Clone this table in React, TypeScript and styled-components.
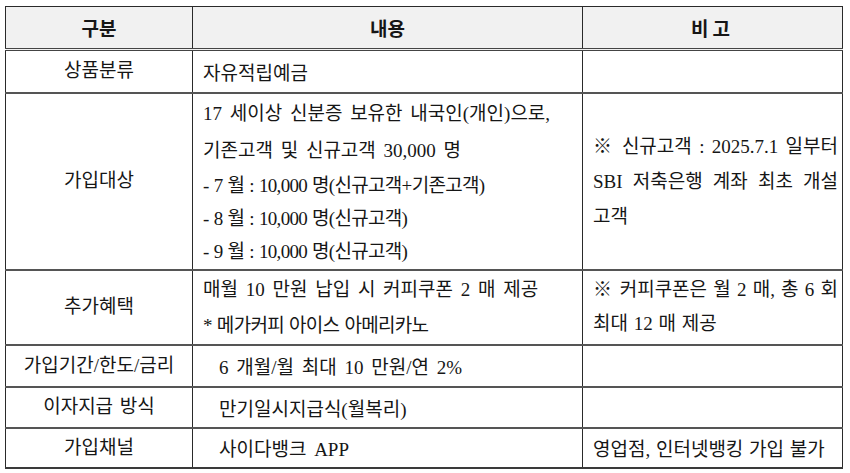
import React from "react";
import styled, { createGlobalStyle } from "styled-components";

const Global = createGlobalStyle`
  html, body { margin: 0; padding: 0; background: #ffffff; }
  body {
    font-family: "Liberation Serif", "Noto Sans CJK KR", serif;
    color: #161616;
  }
`;

const Page = styled.div`
  padding: 6px 0 0 5px;
`;

const Table = styled.table`
  width: 837px;
  border-collapse: collapse;
  table-layout: fixed;
  font-size: 19px;
  border-left: 1px solid #2a2a2a;
  border-right: 1px solid #2a2a2a;
  border-top: 1px solid #2a2a2a;
  border-bottom: 2px solid #3a3a3a;
`;

const HeadCell = styled.th<{ $ls?: number }>`
  height: 41px;
  padding: 0;
  background: #f1f1f1;
  font-weight: 700;
  text-align: center;
  vertical-align: middle;
  letter-spacing: ${(p) => p.$ls ?? 0}px;
  border-right: 1px solid #2a2a2a;
  border-bottom: 3px double #444;
  &:last-child { border-right: none; }
`;

const Row = styled.tr<{ $h: number }>`
  height: ${(p) => p.$h}px;
  & > td { border-bottom: 2px solid #555; }
  &:last-child > td { border-bottom: none; }
`;

const LabelCell = styled.td`
  padding: 0;
  text-align: center;
  vertical-align: middle;
  border-right: 1px solid #2a2a2a;
  line-height: 24px;
  white-space: nowrap;
  word-spacing: 2px;
`;

const ContentCell = styled.td<{ $indent?: boolean }>`
  padding: 0 4px 0 ${(p) => (p.$indent ? 26 : 10)}px;
  vertical-align: middle;
  border-right: 1px solid #2a2a2a;
  white-space: nowrap;
  word-spacing: 3px;
`;

const NoteCell = styled.td`
  padding: 0 4px 0 10px;
  vertical-align: middle;
  white-space: nowrap;
  word-spacing: 1px;
`;

const Line = styled.div<{ $lh: number; $justify?: boolean; $tight?: boolean }>`
  display: block;
  line-height: ${(p) => p.$lh}px;
  text-align: ${(p) => (p.$justify ? "justify" : "left")};
  text-align-last: ${(p) => (p.$justify ? "justify" : "auto")};
  white-space: ${(p) => (p.$justify ? "normal" : "nowrap")};
  word-break: keep-all;
  word-spacing: ${(p) => (p.$justify ? "0" : p.$tight ? "1px" : "inherit")};
  letter-spacing: ${(p) => (p.$tight ? "-0.7px" : "0")};
`;

const Cols = () => (
  <colgroup>
    <col style={{ width: 187 }} />
    <col style={{ width: 390 }} />
    <col style={{ width: 260 }} />
  </colgroup>
);

export default function App() {
  return (
    <Page>
      <Global />
      <Table>
        <Cols />
        <thead>
          <tr>
            <HeadCell>구분</HeadCell>
            <HeadCell>내용</HeadCell>
            <HeadCell $ls={4}>비고</HeadCell>
          </tr>
        </thead>
        <tbody>
          <Row $h={43}>
            <LabelCell>상품분류</LabelCell>
            <ContentCell>자유적립예금</ContentCell>
            <NoteCell />
          </Row>
          <Row $h={177}>
            <LabelCell>가입대상</LabelCell>
            <ContentCell>
              <Line $lh={37}>17 세이상 신분증 보유한 내국인(개인)으로,</Line>
              <Line $lh={37}>기존고객 및 신규고객 30,000 명</Line>
              <Line $lh={33} $tight>- 7 월 : 10,000 명(신규고객+기존고객)</Line>
              <Line $lh={33} $tight>- 8 월 : 10,000 명(신규고객)</Line>
              <Line $lh={33} $tight>- 9 월 : 10,000 명(신규고객)</Line>
            </ContentCell>
            <NoteCell>
              <Line $lh={35} $justify>※ 신규고객 : 2025.7.1 일부터</Line>
              <Line $lh={35} $justify>SBI 저축은행 계좌 최초 개설</Line>
              <Line $lh={35}>고객</Line>
            </NoteCell>
          </Row>
          <Row $h={75}>
            <LabelCell>추가혜택</LabelCell>
            <ContentCell>
              <Line $lh={38}>매월 10 만원 납입 시 커피쿠폰 2 매 제공</Line>
              <Line $lh={34} $tight>* 메가커피 아이스 아메리카노</Line>
            </ContentCell>
            <NoteCell>
              <Line $lh={34} $justify>※ 커피쿠폰은 월 2 매, 총 6 회</Line>
              <Line $lh={34}>최대 12 매 제공</Line>
            </NoteCell>
          </Row>
          <Row $h={42}>
            <LabelCell>가입기간/한도/금리</LabelCell>
            <ContentCell $indent>6 개월/월 최대 10 만원/연 2%</ContentCell>
            <NoteCell />
          </Row>
          <Row $h={41}>
            <LabelCell>이자지급 방식</LabelCell>
            <ContentCell $indent>만기일시지급식(월복리)</ContentCell>
            <NoteCell />
          </Row>
          <Row $h={40}>
            <LabelCell>가입채널</LabelCell>
            <ContentCell $indent>사이다뱅크 APP</ContentCell>
            <NoteCell>영업점, 인터넷뱅킹 가입 불가</NoteCell>
          </Row>
        </tbody>
      </Table>
    </Page>
  );
}
